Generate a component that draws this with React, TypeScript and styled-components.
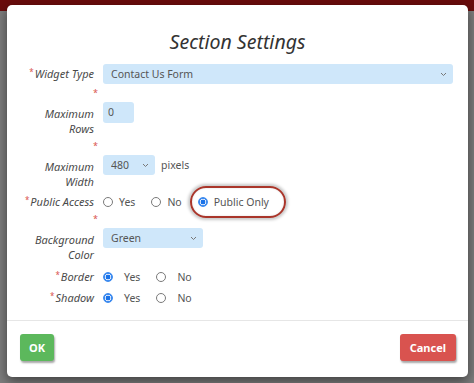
import { FC, ReactNode } from "react";
import styled, { createGlobalStyle } from "styled-components";

const GlobalStyle = createGlobalStyle`
  html, body {
    margin: 0;
    padding: 0;
  }
  body {
    font-family: "Noto Sans", "DejaVu Sans", sans-serif;
  }
`;

const Page = styled.div`
  position: relative;
  width: 474px;
  height: 383px;
  overflow: hidden;
  background: #7d7d7d;
`;

const TopBar = styled.div`
  height: 11px;
  background: #6b0c0c;
`;

// the modal sits over the dimmed page
const Dialog = styled.div`
  position: absolute;
  left: 7px;
  top: 5px;
  width: 461px;
  height: 372px;
  background: #fff;
  border-radius: 5px;
  box-shadow: 0 4px 12px rgba(0, 0, 0, 0.5);
  display: flex;
  flex-direction: column;
`;

const Title = styled.h2`
  margin: 0;
  padding-top: 25px;
  height: 24px;
  line-height: 24px;
  text-align: center;
  font-size: 19.5px;
  font-style: italic;
  font-weight: 400;
  color: #333;
`;

const Form = styled.div`
  margin-top: 8px;
  padding: 0 15px 12px 8px;
  flex: 1;
`;

const Row = styled.div<{ $mt?: number; $h?: number }>`
  display: flex;
  align-items: center;
  gap: 9px;
  margin-top: ${(p) => p.$mt ?? 0}px;
  height: ${(p) => (p.$h ? `${p.$h}px` : "auto")};
`;

const Label = styled.div`
  width: 79px;
  flex: none;
  text-align: right;
  font-size: 11px;
  line-height: 15px;
  font-style: italic;
  color: #4a4a4a;
  white-space: nowrap;
`;

const Req = styled.sup`
  color: #d9534f;
  font-size: 8px;
  font-style: normal;
  vertical-align: 3px;
  line-height: 0;
  margin-right: 1px;
`;

const ReqLine = styled.div`
  height: 18px;
  line-height: 9px;
  font-size: 9px;
  font-style: normal;
  color: #d9534f;
  margin-right: -4px;
`;

const Control = styled.div`
  flex: 1;
  display: flex;
  align-items: center;
  gap: 6px;
  font-size: 10.5px;
  color: #555;
`;

const SelectWrap = styled.div<{ $w?: number }>`
  position: relative;
  width: ${(p) => (p.$w ? `${p.$w}px` : "100%")};
  height: 20px;
`;

const Select = styled.select`
  appearance: none;
  width: 100%;
  height: 100%;
  border: none;
  border-radius: 3px;
  background: #cfe7fa;
  color: #555;
  font-family: inherit;
  font-size: 10.5px;
  padding: 0 0 0 8px;
  outline: none;
`;

const Chevron = styled.svg`
  position: absolute;
  right: 6px;
  top: 8px;
  pointer-events: none;
`;

const NumInput = styled.input`
  width: 31px;
  height: 21px;
  box-sizing: border-box;
  border: none;
  border-radius: 3px;
  background: #cfe7fa;
  color: #555;
  font-family: inherit;
  font-size: 10.5px;
  padding: 0 0 0 5px;
  outline: none;
`;

const Unit = styled.span`
  color: #555;
`;

const Options = styled.div<{ $gap: number }>`
  display: flex;
  align-items: center;
  gap: 16px;

  label {
    gap: ${(p) => p.$gap}px;
  }
`;

const Option = styled.label`
  display: flex;
  align-items: center;
  color: #555;
  font-size: 10.5px;
`;

const Highlight = styled.div`
  display: flex;
  align-items: center;
  height: 28px;
  margin: -4px 0 -4px -8px;
  padding: 0 15px 0 6px;
  border: 2px solid #a9352a;
  border-radius: 16px;
  box-shadow: 0 0 3px 2px rgba(0, 0, 0, 0.22), inset 0 0 2px rgba(0, 0, 0, 0.15);
`;

const Radio = styled.input.attrs({ type: "radio" })`
  appearance: none;
  margin: 0;
  width: 10px;
  height: 10px;
  border-radius: 50%;
  border: 1px solid #7a7a7a;
  background: #fff;
  box-sizing: border-box;
  flex: none;

  &:checked {
    border: 1px solid #3d8bef;
    background: radial-gradient(circle, #1a73e8 0 38%, #dfeafd 46% 54%, #3d8bef 62%);
  }
`;

const Footer = styled.div`
  border-top: 1px solid #e6e6e6;
  padding: 13px 12px 16px 13px;
  display: flex;
  justify-content: space-between;
`;

const Button = styled.button<{ $variant: "ok" | "cancel" }>`
  height: 27px;
  padding: 0 ${(p) => (p.$variant === "ok" ? 9 : 10)}px;
  border: none;
  border-radius: 3px;
  background: ${(p) => (p.$variant === "ok" ? "#5cb85c" : "#d9534f")};
  color: #fff;
  font-family: inherit;
  font-size: 11px;
  font-weight: 700;
  box-shadow: 1px 2px 2px rgba(0, 0, 0, 0.35);
`;

const ChevronIcon: FC = () => (
  <Chevron width="7" height="5" viewBox="0 0 7 5">
    <path d="M1 1 L3.5 3.5 L6 1" fill="none" stroke="#777" strokeWidth="1" />
  </Chevron>
);

const Dropdown: FC<{ value: string; width?: number }> = ({ value, width }) => (
  <SelectWrap $w={width}>
    <Select defaultValue={value}>
      <option>{value}</option>
    </Select>
    <ChevronIcon />
  </SelectWrap>
);

const TallLabel: FC<{ children: ReactNode }> = ({ children }) => (
  <Label>
    <ReqLine>*</ReqLine>
    {children}
  </Label>
);

const App: FC = () => {
  return (
    <>
      <GlobalStyle />
      <Page>
        <TopBar />
        <Dialog>
          <Title>Section Settings</Title>
          <Form>
            <Row $h={23}>
              <Label>
                <Req>*</Req>Widget Type
              </Label>
              <Control>
                <Dropdown value="Contact Us Form" />
              </Control>
            </Row>

            <Row $mt={3}>
              <TallLabel>
                Maximum
                <br />
                Rows
              </TallLabel>
              <Control>
                <NumInput defaultValue="0" />
              </Control>
            </Row>

            <Row $mt={5}>
              <TallLabel>
                Maximum
                <br />
                Width
              </TallLabel>
              <Control>
                <Dropdown value="480" width={52} />
                <Unit>pixels</Unit>
              </Control>
            </Row>

            <Row $h={25}>
              <Label>
                <Req>*</Req>Public Access
              </Label>
              <Control>
                <Options $gap={6}>
                  <Option>
                    <Radio name="access" />
                    Yes
                  </Option>
                  <Option>
                    <Radio name="access" />
                    No
                  </Option>
                  <Highlight>
                    <Option>
                      <Radio name="access" defaultChecked />
                      Public Only
                    </Option>
                  </Highlight>
                </Options>
              </Control>
            </Row>

            <Row>
              <TallLabel>
                Background
                <br />
                Color
              </TallLabel>
              <Control>
                <Dropdown value="Green" width={100} />
              </Control>
            </Row>

            <Row $mt={4} $h={21}>
              <Label>
                <Req>*</Req>Border
              </Label>
              <Control>
                <Options $gap={11}>
                  <Option>
                    <Radio name="border" defaultChecked />
                    Yes
                  </Option>
                  <Option>
                    <Radio name="border" />
                    No
                  </Option>
                </Options>
              </Control>
            </Row>

            <Row $h={21}>
              <Label>
                <Req>*</Req>Shadow
              </Label>
              <Control>
                <Options $gap={11}>
                  <Option>
                    <Radio name="shadow" defaultChecked />
                    Yes
                  </Option>
                  <Option>
                    <Radio name="shadow" />
                    No
                  </Option>
                </Options>
              </Control>
            </Row>
          </Form>
          <Footer>
            <Button $variant="ok">OK</Button>
            <Button $variant="cancel">Cancel</Button>
          </Footer>
        </Dialog>
      </Page>
    </>
  );
};

export default App;
